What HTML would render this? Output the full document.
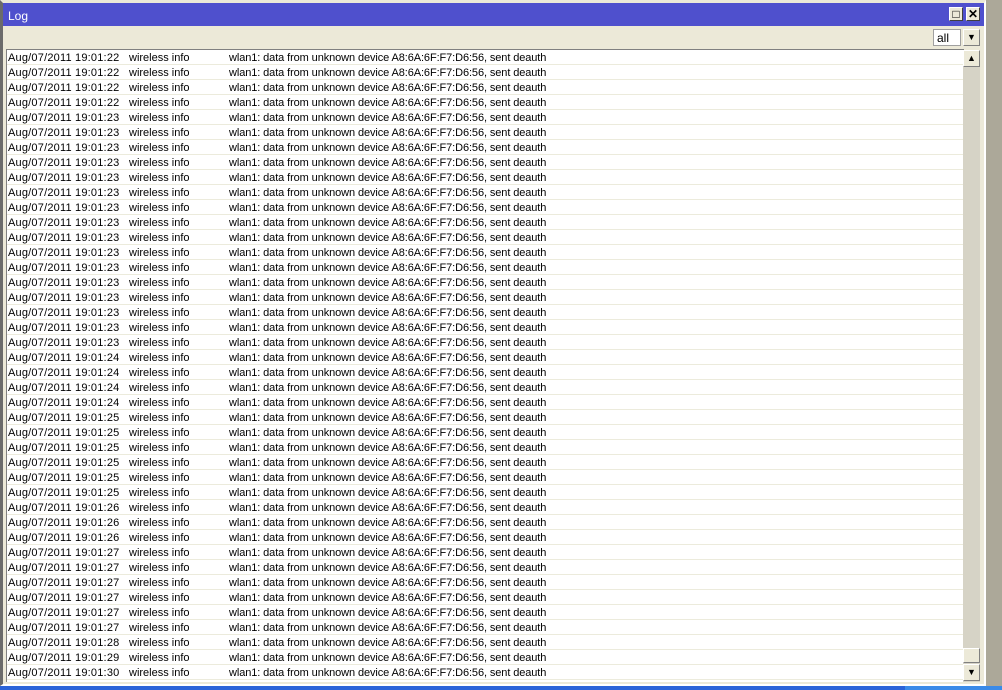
<!DOCTYPE html>
<html><head><style>
*{margin:0;padding:0;box-sizing:border-box}
body{width:1002px;height:690px;background:#aca899;position:relative;overflow:hidden;font-family:"Liberation Sans",sans-serif;font-size:11px}
#task{position:absolute;left:0;top:686px;width:1002px;height:4px;background:#2a63d8}
#task2{position:absolute;left:905px;top:686px;width:97px;height:4px;background:#3a8ae8}
#win{position:absolute;left:0;top:0;width:986px;height:686px;background:#ece9d8;border-left:3px solid #6b6b6b;border-right:2px solid #fff;border-bottom:2px solid #fff;border-top:3px solid #ece9d8}
#tb{position:absolute;left:3px;top:3px;width:981px;height:23px;background:#4f50cd;color:#fff;font-size:12px;padding:6px 0 0 5px}
.btn{position:absolute;top:7px;width:14px;height:14px;background:#ece9d8;border:1px solid #fff;border-right-color:#404040;border-bottom-color:#404040;font-size:12px;font-weight:bold;line-height:12px;text-align:center;color:#000}
#list{position:absolute;left:6px;top:49px;width:958px;height:633px;background:#fff;border-top:1px solid #808080;border-left:1px solid #808080}
.r{height:15px;border-bottom:1px solid #ecebdc;white-space:nowrap;position:relative;line-height:16px;color:#000}
.r span{position:absolute;top:0}
.a{letter-spacing:0.2px}
.m{letter-spacing:-0.1px}
#sb{position:absolute;left:963px;top:50px;width:17px;height:632px;background:#d6d3c6}
.sbb{position:absolute;left:0;width:17px;height:17px;background:#ece9d8;border:1px solid #fff;border-right-color:#808080;border-bottom-color:#808080;text-align:center;font-size:9px;line-height:15px}
#dd{position:absolute;left:933px;top:29px;width:28px;height:17px;background:#fff;border:1px solid #a0a0a0;font-size:12px;padding:1px 0 0 3px}
</style></head><body>
<div id="win"></div>
<div id="tb">Log</div>
<div class="btn" style="left:949px">&#9633;</div>
<div class="btn" style="left:966px">✕</div>
<div id="dd">all</div>
<div class="sbb" style="left:963px;top:29px;height:17px;">&#9660;</div>
<div id="list">
<script>
var t=[];var c={22:4,23:16,24:4,25:6,26:3,27:6,28:1,29:1,30:1};
for(var k in c)for(var i=0;i<c[k];i++)t.push(k);
var h='';t.forEach(function(s){h+='<div class="r"><span class="a" style="left:1px">Aug/07/2011 19:01:'+s+'</span><span style="left:122px">wireless info</span><span class="m" style="left:222px">wlan1: data from unknown device A8:6A:6F:F7:D6:56, sent deauth</span></div>'});
document.write(h);
</script>
</div>
<div id="sb">
<div class="sbb" style="top:0">&#9650;</div>
<div class="sbb" style="top:598px;height:15px"></div>
<div class="sbb" style="top:614px">&#9660;</div>
</div>
<div id="task"></div><div id="task2"></div>
</body></html>
